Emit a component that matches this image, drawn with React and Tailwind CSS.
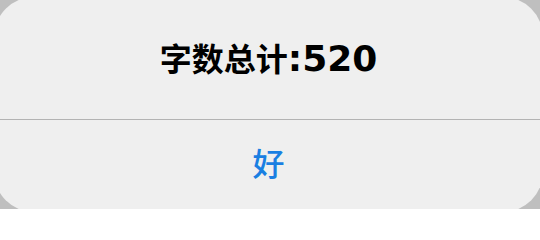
export default function App() {
  return (
    <div className="w-[540px] h-[209px] overflow-hidden bg-[#bfbfbf] flex">
      <div className="shrink-0 -ml-[6px] -mt-[3px] w-[549px] h-[215px] rounded-[40px] bg-[#efefef] flex flex-col">
        <div className="h-[123px] shrink-0 flex items-center justify-center border-b border-[#b3b3b3] text-black">
          <div className="flex items-baseline pt-[1px]">
            <span className="text-[32px] font-bold leading-none font-['Noto_Sans_CJK_SC',sans-serif]">
              字数总计
            </span>
            <span className="text-[36px] font-bold leading-none font-['DejaVu_Sans',sans-serif]">
              :520
            </span>
          </div>
        </div>
        <div className="h-[84px] flex items-center justify-center">
          <span className="text-[32px] font-medium leading-none text-[#1a7fe2] font-['Noto_Sans_CJK_SC',sans-serif]">
            好
          </span>
        </div>
      </div>
    </div>
  );
}
